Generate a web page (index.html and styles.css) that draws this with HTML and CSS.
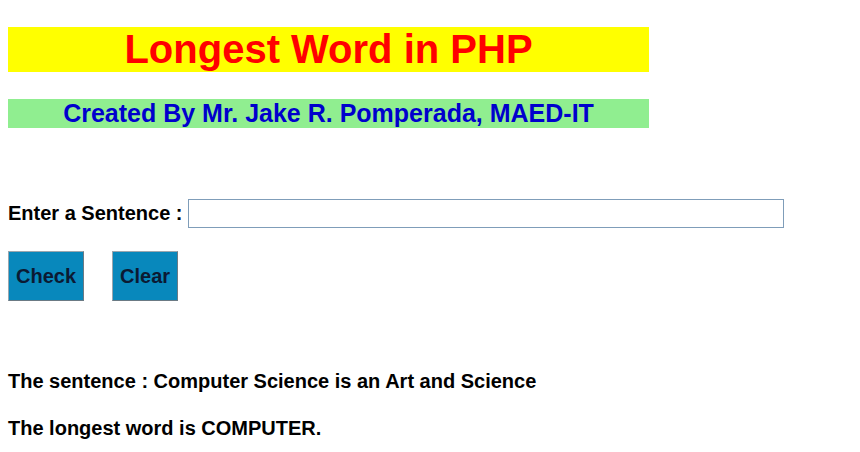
FILE: index.html
```html
<!DOCTYPE html>
<html>
<head>
<meta charset="utf-8">
<title>Longest Word in PHP</title>
<link rel="stylesheet" href="styles.css">
</head>
<body>
<div class="header">
  <h1 class="title">Longest Word in PHP</h1>
  <h2 class="subtitle">Created By Mr. Jake R. Pomperada, MAED-IT</h2>
</div>
<form class="form">
  <div class="row">
    <label class="label" for="sentence">Enter a Sentence :</label>
    <input class="field" id="sentence" type="text">
  </div>
  <div class="buttons">
    <button class="btn" type="button">Check</button>
    <button class="btn" type="button">Clear</button>
  </div>
</form>
<div class="results">
  <p class="result">The sentence : Computer Science is an Art and Science</p>
  <p class="result">The longest word is COMPUTER.</p>
</div>
</body>
</html>
```
FILE: styles.css
```css
html, body {
  margin: 0;
  padding: 0;
  background: #ffffff;
}
body {
  padding: 8px;
  font-family: "Liberation Sans", Arial, sans-serif;
  font-weight: bold;
  color: #000000;
}
.header {
  width: 641px;
  display: flex;
  flex-direction: column;
  gap: 27px;
  margin-top: 19px;
}
.title {
  margin: 0;
  height: 45px;
  line-height: 45px;
  background: #ffff00;
  color: #ff0000;
  text-align: center;
  font-size: 40px;
  font-weight: bold;
}
.subtitle {
  margin: 0;
  height: 29px;
  line-height: 29px;
  background: #90ee90;
  color: #0000cd;
  text-align: center;
  font-size: 25px;
  font-weight: bold;
}
.form {
  margin: 71px 0 0 0;
}
.row {
  display: flex;
  align-items: center;
  gap: 5px;
}
.label {
  font-size: 20px;
  line-height: 23px;
}
.field {
  box-sizing: border-box;
  width: 596px;
  height: 29px;
  margin: 0;
  border: 1px solid #7f9db9;
  background: #ffffff;
  padding: 0 4px;
  font-family: "Liberation Sans", Arial, sans-serif;
  font-size: 16px;
}
.buttons {
  display: flex;
  gap: 28px;
  margin-top: 23px;
}
.btn {
  margin: 0;
  padding: 13px 7px 13px 7px;
  line-height: 22px;
  font-family: "Liberation Sans", Arial, sans-serif;
  font-size: 20px;
  font-weight: bold;
  color: #0b1a33;
  background: #0888bc;
  border: 1px solid;
  border-color: #9aa6ae #6b7a84 #6b7a84 #9aa6ae;
  border-radius: 0;
}
.results {
  margin-top: 69px;
  display: flex;
  flex-direction: column;
  gap: 24px;
}
.result {
  margin: 0;
  font-size: 20px;
  line-height: 23px;
}
```
